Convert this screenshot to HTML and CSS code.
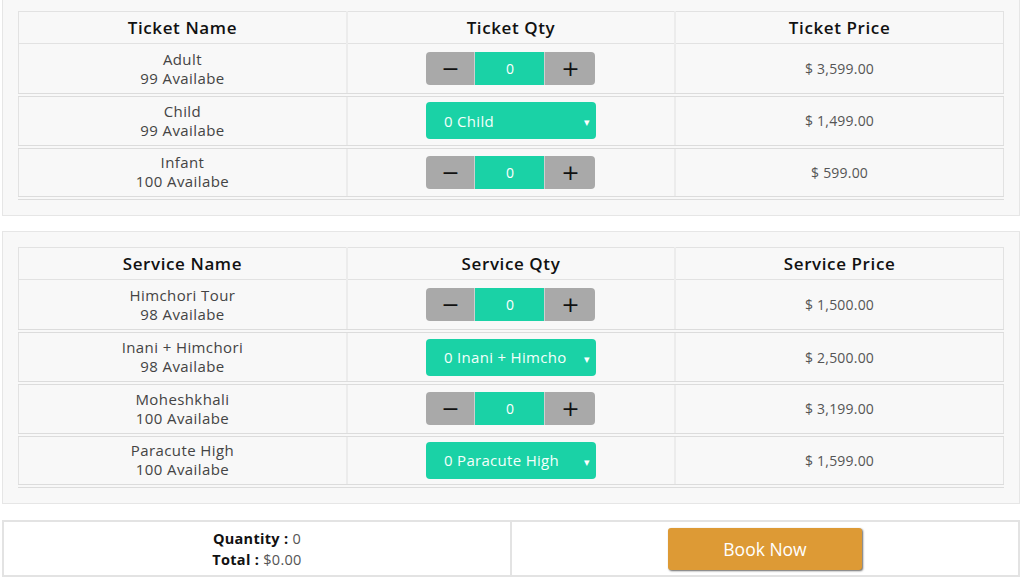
FILE: index.html
```html
<!DOCTYPE html>
<html>
	<head>
		<meta charset="UTF-8">
		<title>Tickets</title>
		<link rel="stylesheet" href="styles.css">
	</head>
	<body>
		<div class="wrap">
			<div class="panel">
				<table class="list">
					<thead>
						<tr><th>Ticket Name</th><th>Ticket Qty</th><th>Ticket Price</th></tr>
					</thead>
					<tbody>
						<tr>
							<td>Adult<br>99 Availabe</td>
							<td><div class="qty"><button class="minus">−</button><span class="num">0</span><button class="plus">+</button></div></td>
							<td class="price">$ 3,599.00</td>
						</tr>
						<tr>
							<td>Child<br>99 Availabe</td>
							<td><div class="pick"><select><option>0 Child</option><option>1 Child</option><option>2 Child</option></select></div></td>
							<td class="price">$ 1,499.00</td>
						</tr>
						<tr>
							<td>Infant<br>100 Availabe</td>
							<td><div class="qty"><button class="minus">−</button><span class="num">0</span><button class="plus">+</button></div></td>
							<td class="price">$ 599.00</td>
						</tr>
					</tbody>
				</table>
			</div>

			<div class="panel">
				<table class="list">
					<thead>
						<tr><th>Service Name</th><th>Service Qty</th><th>Service Price</th></tr>
					</thead>
					<tbody>
						<tr>
							<td>Himchori Tour<br>98 Availabe</td>
							<td><div class="qty"><button class="minus">−</button><span class="num">0</span><button class="plus">+</button></div></td>
							<td class="price">$ 1,500.00</td>
						</tr>
						<tr>
							<td>Inani + Himchori<br>98 Availabe</td>
							<td><div class="pick"><select><option>0 Inani + Himchori</option><option>1 Inani + Himchori</option></select></div></td>
							<td class="price">$ 2,500.00</td>
						</tr>
						<tr>
							<td>Moheshkhali<br>100 Availabe</td>
							<td><div class="qty"><button class="minus">−</button><span class="num">0</span><button class="plus">+</button></div></td>
							<td class="price">$ 3,199.00</td>
						</tr>
						<tr>
							<td>Paracute High<br>100 Availabe</td>
							<td><div class="pick"><select><option>0 Paracute High</option><option>1 Paracute High</option></select></div></td>
							<td class="price">$ 1,599.00</td>
						</tr>
					</tbody>
				</table>
			</div>

			<div class="summary">
				<div class="totals">
					<p><b>Quantity :</b> 0</p>
					<p><b>Total :</b> $0.00</p>
				</div>
				<div class="book">
					<button>Book Now</button>
				</div>
			</div>
		</div>
	</body>
</html>
```

FILE: styles.css
```css
*{
	margin:0;
	padding:0;
	box-sizing:border-box;
}
body{
	font-family:"Open Sans","Liberation Sans",sans-serif;
	background:#fff;
	color:#444;
	padding:0 4px 0 2px;
}
.wrap{
	margin-top:-5px;
}
.panel{
	background:#f8f8f8;
	border:1px solid #e6e6e6;
	padding:15px;
	margin-bottom:15px;
}
.panel + .panel{
	margin-bottom:16px;
}

/* tables */
.list{
	width:100%;
	border-collapse:collapse;
	table-layout:fixed;
}
.list th{
	height:32px;
	font-size:17px;
	font-weight:600;
	letter-spacing:0.6px;
	color:#111;
	border:1px solid #e2e2e2;
}
.list td{
	height:51.6px;
	font-size:15px;
	letter-spacing:0.4px;
	line-height:19px;
	text-align:center;
	vertical-align:middle;
	border:1px solid #e2e2e2;
}
.list th + th,
.list td + td{
	border-left:2px solid #ececec;
}
.list tbody tr{
	border-bottom:4px double #dcdcdc;
}
.list td.price{
	color:#555;
	font-size:14px;
	letter-spacing:0.2px;
}

/* stepper */
.qty{
	display:inline-flex;
	height:33px;
	border-radius:4px;
	overflow:hidden;
	vertical-align:middle;
}
.qty button{
	width:48px;
	border:0;
	background:#a9a9a9;
	color:#111;
	font-family:"DejaVu Sans",sans-serif;
	font-size:22px;
	line-height:33px;
	cursor:pointer;
}
.qty .plus{
	width:50px;
}
.qty .num{
	width:71px;
	background:#1ad2a6;
	color:#fff;
	border-left:1px solid #cfcfcf;
	border-right:1px solid #cfcfcf;
	font-size:14px;
	letter-spacing:0;
	line-height:33px;
	text-align:center;
}

/* select */
.pick{
	position:relative;
	display:inline-block;
	width:170px;
	vertical-align:middle;
}
.pick select{
	-webkit-appearance:none;
	appearance:none;
	width:170px;
	height:37px;
	border:0;
	border-radius:4px;
	background:#1ad2a6;
	color:#f4fffb;
	font-family:"Open Sans","Liberation Sans",sans-serif;
	font-size:15px;
	letter-spacing:0.3px;
	padding:0 30px 0 18px;
	display:block;
}
.pick::after{
	content:"▾";
	position:absolute;
	right:6px;
	top:10px;
	font-size:11px;
	color:#fff;
	pointer-events:none;
}

/* summary */
.summary{
	display:flex;
	height:57px;
	background:#fff;
	border:2px solid #e3e3e3;
}
.totals{
	flex:1;
	display:flex;
	flex-direction:column;
	justify-content:center;
	align-items:center;
	border-right:2px solid #e3e3e3;
	font-size:14.5px;
	letter-spacing:0.3px;
	line-height:21px;
	color:#555;
}
.totals b{
	color:#111;
	font-weight:700;
}
.book{
	flex:1;
	display:flex;
	align-items:center;
	justify-content:center;
}
.book button{
	width:194px;
	height:42px;
	border:0;
	border-radius:3px;
	background:#dd9a35;
	color:#fff;
	font-family:"Open Sans","Liberation Sans",sans-serif;
	font-size:17.5px;
	box-shadow:1px 1px 2px rgba(0,0,0,0.6);
	cursor:pointer;
}
```
